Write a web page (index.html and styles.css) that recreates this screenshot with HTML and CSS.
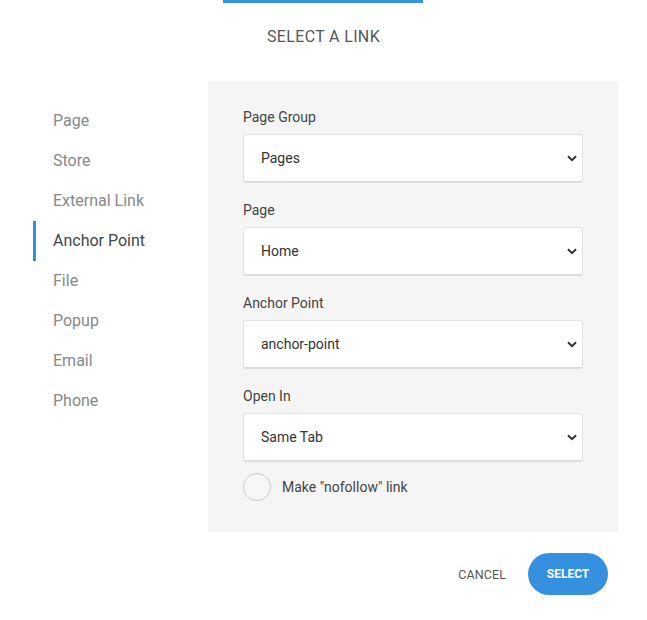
FILE: index.html
```html
<!DOCTYPE html>
<html>
<head>
<meta charset="utf-8">
<link rel="stylesheet" href="styles.css">
</head>
<body>
<div class="modal">
  <div class="topbar"></div>
  <h1 class="title">SELECT A LINK</h1>
  <div class="content">
    <ul class="nav">
      <li class="nav-item">Page</li>
      <li class="nav-item">Store</li>
      <li class="nav-item">External Link</li>
      <li class="nav-item active">Anchor Point</li>
      <li class="nav-item">File</li>
      <li class="nav-item">Popup</li>
      <li class="nav-item">Email</li>
      <li class="nav-item">Phone</li>
    </ul>
    <div class="panel">
      <div class="field">
        <div class="label">Page Group</div>
        <div class="select"><span>Pages</span><svg class="chev" width="10" height="7" viewBox="0 0 10 7"><path d="M1 1.2 L5 5.2 L9 1.2" fill="none" stroke="#333" stroke-width="2"/></svg></div>
      </div>
      <div class="field">
        <div class="label">Page</div>
        <div class="select"><span>Home</span><svg class="chev" width="10" height="7" viewBox="0 0 10 7"><path d="M1 1.2 L5 5.2 L9 1.2" fill="none" stroke="#333" stroke-width="2"/></svg></div>
      </div>
      <div class="field">
        <div class="label">Anchor Point</div>
        <div class="select"><span>anchor-point</span><svg class="chev" width="10" height="7" viewBox="0 0 10 7"><path d="M1 1.2 L5 5.2 L9 1.2" fill="none" stroke="#333" stroke-width="2"/></svg></div>
      </div>
      <div class="field">
        <div class="label">Open In</div>
        <div class="select"><span>Same Tab</span><svg class="chev" width="10" height="7" viewBox="0 0 10 7"><path d="M1 1.2 L5 5.2 L9 1.2" fill="none" stroke="#333" stroke-width="2"/></svg></div>
      </div>
      <div class="check-row">
        <span class="radio"></span>
        <span class="check-label">Make "nofollow" link</span>
      </div>
    </div>
  </div>
  <div class="footer">
    <button class="btn-cancel">CANCEL</button>
    <button class="btn-select">SELECT</button>
  </div>
</div>
</body>
</html>
```
FILE: styles.css
```css
* { box-sizing: border-box; }
html, body { margin: 0; padding: 0; background: #fff; }
body { font-family: Roboto, "Noto Sans", "Liberation Sans", sans-serif; }
.modal { width: 647px; height: 620px; background: #fff; display: flex; flex-direction: column; }
.topbar { width: 200px; height: 3px; background: #3591e0; margin-left: 223px; }
.title { margin: 0; padding-top: 22px; height: 78px; text-align: center; font-size: 16px; font-weight: 400; color: #555; letter-spacing: 0.35px; line-height: 24px; }
.content { display: flex; align-items: flex-start; }
.nav { list-style: none; margin: 0; padding: 20px 0 0 33px; width: 208px; }
.nav-item { height: 40px; line-height: 40px; padding-left: 17px; border-left: 3px solid transparent; font-size: 16px; color: #888; }
.nav-item.active { border-left-color: #3591e0; color: #444; }
.panel { width: 410px; background: #f5f5f5; padding: 27px 35px 31px 35px; }
.field { margin-bottom: 18px; }
.field:nth-child(4) { margin-bottom: 0; }
.label { font-size: 14px; line-height: 19px; color: #444; margin-bottom: 7px; }
.select { height: 49px; background: #fff; border: 1px solid #e2e2e2; border-bottom: 2px solid #dcdcdc; border-radius: 3px; display: flex; align-items: center; justify-content: space-between; padding: 0 5px 0 17px; font-size: 14px; color: #333; }
.chev { margin-top: 1px; }
.check-row { display: flex; align-items: center; margin-top: 11px; height: 28px; }
.radio { width: 28px; height: 28px; border-radius: 50%; border: 1px solid #ccc; background: #f7f7f7; }
.check-label { margin-left: 11px; font-size: 14px; color: #444; }
.footer { display: flex; justify-content: flex-end; align-items: center; padding: 21px 39px 0 0; }
.btn-cancel { border: none; background: none; font-family: inherit; font-size: 12.5px; color: #555; padding: 0; margin-right: 22px; letter-spacing: 0.1px; }
.btn-select { border: none; width: 80px; height: 42px; border-radius: 21px; background: #3591e0; color: #fff; font-family: inherit; font-weight: 700; font-size: 12px; padding: 0; }
```
